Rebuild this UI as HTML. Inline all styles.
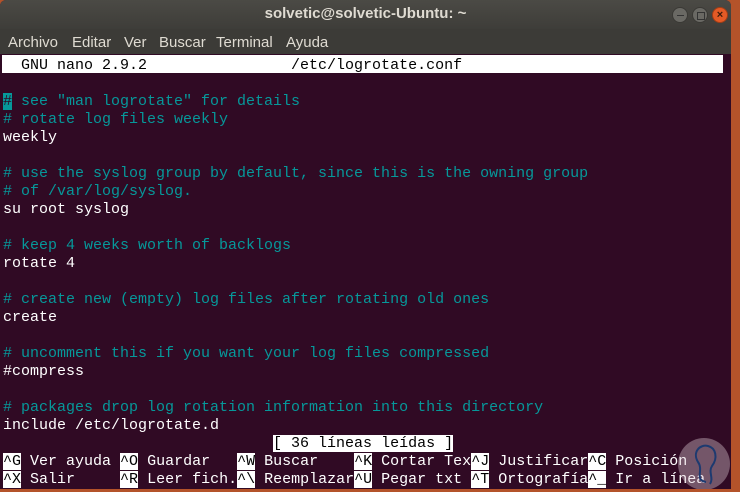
<!DOCTYPE html>
<html><head><meta charset="utf-8">
<style>
html,body{margin:0;padding:0;}
body{width:740px;height:492px;overflow:hidden;background:#b4532a;position:relative;font-family:"Liberation Sans",sans-serif;}
.win{position:absolute;left:0;top:0;width:731px;height:489px;background:#300a24;border-radius:6px 6px 0 0;overflow:hidden;}
.title{position:absolute;left:0;top:0;width:731px;height:29px;background:linear-gradient(#4b4a45,#3e3d39);color:#dfdbd2;font-weight:bold;font-size:15px;text-align:center;line-height:28px;}
.menu{position:absolute;left:0;top:29px;width:731px;height:25px;background:#3c3b37;color:#dfdbd2;font-size:15px;line-height:27px;}
.menu span{position:absolute;top:0;}
.btn{position:absolute;top:7px;width:16px;height:16px;border-radius:50%;background:#6a6964;border:1px solid #3a3935;box-sizing:border-box;}
.term{position:absolute;left:3px;top:57px;font-family:"Liberation Mono",monospace;font-size:15px;line-height:18px;color:#fff;}
.row{height:18px;white-space:pre;}
.c{color:#06989a;}
.inv{background:#fff;color:#000;}
.hdr{position:absolute;left:2px;top:55px;width:721px;height:18px;background:#fff;}
</style></head><body>
<div class="win">
 <div class="title">solvetic@solvetic-Ubuntu: ~</div>
 <div class="btn" style="left:672px"><div style="position:absolute;left:4px;top:7px;width:7px;height:1px;background:#333"></div></div>
 <div class="btn" style="left:692px"><div style="position:absolute;left:4px;top:4px;width:6px;height:6px;border:1px solid #333"></div></div>
 <div class="btn" style="left:712px;background:#e45a26;border-color:#a43d15;color:#3a1a0a;font-size:11px;line-height:14px;text-align:center;font-weight:bold">×</div>
 <div class="menu"><span style="left:8px">Archivo</span><span style="left:72px">Editar</span><span style="left:124px">Ver</span><span style="left:159px">Buscar</span><span style="left:216px">Terminal</span><span style="left:286px">Ayuda</span></div>
 <div class="hdr"></div>
 <div class="term"><div class="row" style="color:#000">  GNU nano 2.9.2                /etc/logrotate.conf</div><div class="row"> </div><div class="row c"><span style="background:#06989a;color:#300a24">#</span> see "man logrotate" for details</div><div class="row c"># rotate log files weekly</div><div class="row">weekly</div><div class="row"> </div><div class="row c"># use the syslog group by default, since this is the owning group</div><div class="row c"># of /var/log/syslog.</div><div class="row">su root syslog</div><div class="row"> </div><div class="row c"># keep 4 weeks worth of backlogs</div><div class="row">rotate 4</div><div class="row"> </div><div class="row c"># create new (empty) log files after rotating old ones</div><div class="row">create</div><div class="row"> </div><div class="row c"># uncomment this if you want your log files compressed</div><div class="row">#compress</div><div class="row"> </div><div class="row c"># packages drop log rotation information into this directory</div><div class="row">include /etc/logrotate.d</div><div class="row">                              <span class="inv">[ 36 líneas leídas ]</span></div><div class="row"><span class="inv">^G</span> Ver ayuda <span class="inv">^O</span> Guardar   <span class="inv">^W</span> Buscar    <span class="inv">^K</span> Cortar Tex<span class="inv">^J</span> Justificar<span class="inv">^C</span> Posición</div><div class="row"><span class="inv">^X</span> Salir     <span class="inv">^R</span> Leer fich.<span class="inv">^\</span> Reemplazar<span class="inv">^U</span> Pegar txt <span class="inv">^T</span> Ortografía<span class="inv">^_</span> Ir a línea</div></div>
 <div style="position:absolute;left:678px;top:438px;width:52px;height:52px;border-radius:50%;background:rgba(220,200,210,0.4)"></div>
 <svg style="position:absolute;left:684px;top:440px" width="40" height="50"><path d="M22 42 C10 40 20 30 14 22 C8 12 16 4 24 6 C32 8 34 18 28 26 C24 32 30 38 26 44" fill="none" stroke="#1d3a70" stroke-width="2"/></svg>
</div>
</body></html>
